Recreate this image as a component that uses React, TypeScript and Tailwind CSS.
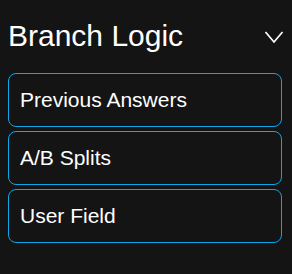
import React from "react";

const items = ["Previous Answers", "A/B Splits", "User Field"];

export default function App() {
  return (
    <div
      className="w-[292px] h-[274px] bg-[#141414] text-white pl-2 pr-[10px] pt-[21px]"
      style={{ fontFamily: '"Liberation Sans", Arial, sans-serif' }}
    >
      <div className="flex items-center justify-between mb-[22px] h-[30px]">
        <div className="text-[30px] leading-[30px]">Branch Logic</div>
        <svg width="20" height="14" viewBox="0 0 20 14" className="mr-[-2px] mb-[-1px]">
          <path d="M1.5 2 L10 12 L18.5 2" fill="none" stroke="#ffffff" strokeWidth="1.7" />
        </svg>
      </div>
      <div className="flex flex-col gap-[4px]">
        {items.map((t) => (
          <div
            key={t}
            className="h-[54px] border border-[#0ea5e9] rounded-lg flex items-center pl-[11px] text-[21px]"
          >
            {t}
          </div>
        ))}
      </div>
    </div>
  );
}
